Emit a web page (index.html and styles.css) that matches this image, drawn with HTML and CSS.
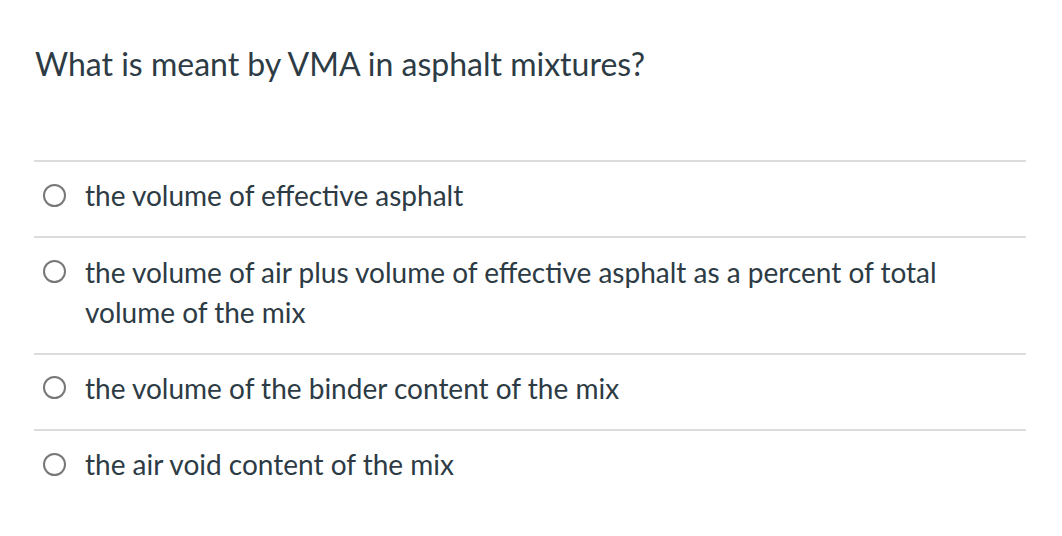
FILE: index.html
```html
<!DOCTYPE html>
<html>
<head>
<meta charset="utf-8">
<link rel="stylesheet" href="styles.css">
</head>
<body>
<div class="quiz">
  <div class="question">What is meant by VMA in asphalt mixtures?</div>
  <div class="answers">
    <div class="answer"><span class="radio"></span><span class="label">the volume of effective asphalt</span></div>
    <div class="answer"><span class="radio"></span><span class="label">the volume of air plus volume of effective asphalt as a percent of total volume of the mix</span></div>
    <div class="answer"><span class="radio"></span><span class="label">the volume of the binder content of the mix</span></div>
    <div class="answer"><span class="radio"></span><span class="label">the air void content of the mix</span></div>
  </div>
</div>
</body>
</html>
```

FILE: styles.css
```css
html, body {
  margin: 0;
  padding: 0;
  background: #fff;
}
body {
  font-family: Lato, "Noto Sans", sans-serif;
  color: #2d3b45;
}
.quiz {
  padding: 42px 36px 0 34px;
}
.question {
  font-size: 32px;
  line-height: 44px;
  padding-left: 1px;
  margin-bottom: 74px;
}
.answers {
  display: flex;
  flex-direction: column;
}
.answer {
  display: flex;
  align-items: flex-start;
  border-top: 2px solid #dcdcdc;
  padding: 13.3px 60px 21px 9px;
}
.radio {
  flex: none;
  box-sizing: border-box;
  width: 23px;
  height: 23px;
  border: 2px solid #777;
  border-radius: 50%;
  margin-top: 8.5px;
  margin-right: 19px;
}
.label {
  font-size: 28px;
  line-height: 40px;
}
```
